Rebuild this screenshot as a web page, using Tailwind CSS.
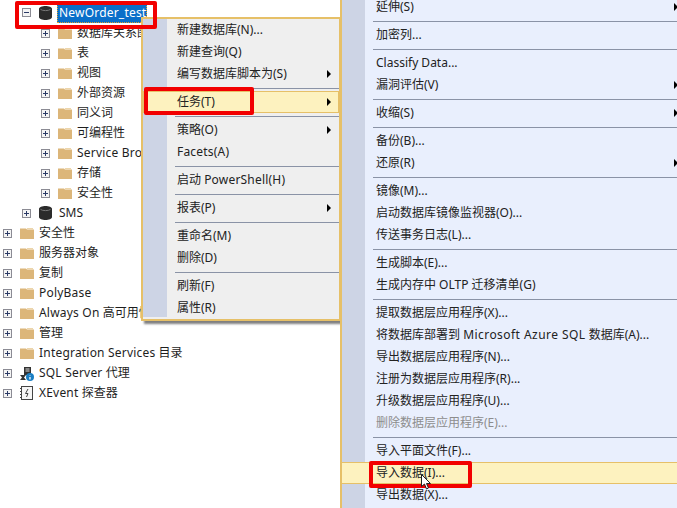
<!DOCTYPE html>
<html lang="zh">
<head>
  <meta charset="UTF-8" />
  <title>SSMS</title>
  <script src="https://cdn.jsdelivr.net/npm/@tailwindcss/browser@4"></script>
</head>
<body class="bg-white overflow-hidden text-[12px] leading-[20px] text-[#1e1e1e] font-['Noto_Sans','Noto_Sans_CJK_SC',sans-serif]">
  <svg class="hidden">
    <symbol id="plus" viewBox="0 0 9 9"><rect x=".5" y=".5" width="8" height="8" fill="#f4f4f4" stroke="#8b8b94"/><path d="M2 4.5h5M4.5 2v5" stroke="#2a3a66"/></symbol>
    <symbol id="minus" viewBox="0 0 9 9"><rect x=".5" y=".5" width="8" height="8" fill="#f4f4f4" stroke="#8b8b94"/><path d="M2 4.5h5" stroke="#2a3a66"/></symbol>
    <symbol id="folder" viewBox="0 0 14 12"><path d="M0 1.5h6l1 1h7V12H0z" fill="#dcb67a"/><path d="M7 1h6v1.500H7z" fill="#ecd5ab"/></symbol>
    <symbol id="db" viewBox="0 0 13 14"><path d="M0 3c0-4 13-4 13 0v8c0 4-13 4-13 0z" fill="#2b2b2b"/><path d="M1.500 3.400c2 1.600 8 1.600 10 0" stroke="#777" fill="none"/></symbol>
  </svg>

  <div class="relative w-[677px] h-[508px] overflow-hidden">
    <!-- object explorer tree -->
    <div class="pt-[2px]">
      <div class="flex items-center h-[21px] pl-[22px]">
        <svg class="w-[9px] h-[9px]"><use href="#minus"/></svg>
        <svg class="w-[13px] h-[14px] ml-2"><use href="#db"/></svg>
        <span class="ml-[5px] mt-[1px] pl-[1px] h-[19px] leading-[15px] bg-[#0a6fc9] text-white border border-dotted border-[#e0a030] w-[90px] whitespace-nowrap tracking-[0.2px]">NewOrder_test</span>
      </div>
      <div class="flex items-center h-5 pl-[41px]"><svg class="w-[9px] h-[9px]"><use href="#plus"/></svg><svg class="w-[14px] h-3 ml-2"><use href="#folder"/></svg><span class="ml-[5px] whitespace-nowrap">数据库关系图</span></div>
      <div class="flex items-center h-5 pl-[41px]"><svg class="w-[9px] h-[9px]"><use href="#plus"/></svg><svg class="w-[14px] h-3 ml-2"><use href="#folder"/></svg><span class="ml-[5px]">表</span></div>
      <div class="flex items-center h-5 pl-[41px]"><svg class="w-[9px] h-[9px]"><use href="#plus"/></svg><svg class="w-[14px] h-3 ml-2"><use href="#folder"/></svg><span class="ml-[5px]">视图</span></div>
      <div class="flex items-center h-5 pl-[41px]"><svg class="w-[9px] h-[9px]"><use href="#plus"/></svg><svg class="w-[14px] h-3 ml-2"><use href="#folder"/></svg><span class="ml-[5px]">外部资源</span></div>
      <div class="flex items-center h-5 pl-[41px]"><svg class="w-[9px] h-[9px]"><use href="#plus"/></svg><svg class="w-[14px] h-3 ml-2"><use href="#folder"/></svg><span class="ml-[5px]">同义词</span></div>
      <div class="flex items-center h-5 pl-[41px]"><svg class="w-[9px] h-[9px]"><use href="#plus"/></svg><svg class="w-[14px] h-3 ml-2"><use href="#folder"/></svg><span class="ml-[5px]">可编程性</span></div>
      <div class="flex items-center h-5 pl-[41px]"><svg class="w-[9px] h-[9px]"><use href="#plus"/></svg><svg class="w-[14px] h-3 ml-2"><use href="#folder"/></svg><span class="ml-[5px] whitespace-nowrap tracking-[0.2px]">Service Broker</span></div>
      <div class="flex items-center h-5 pl-[41px]"><svg class="w-[9px] h-[9px]"><use href="#plus"/></svg><svg class="w-[14px] h-3 ml-2"><use href="#folder"/></svg><span class="ml-[5px]">存储</span></div>
      <div class="flex items-center h-5 pl-[41px]"><svg class="w-[9px] h-[9px]"><use href="#plus"/></svg><svg class="w-[14px] h-3 ml-2"><use href="#folder"/></svg><span class="ml-[5px]">安全性</span></div>
      <div class="flex items-center h-5 pl-[22px]"><svg class="w-[9px] h-[9px]"><use href="#plus"/></svg><svg class="w-[13px] h-[14px] ml-2"><use href="#db"/></svg><span class="ml-[7px]">SMS</span></div>
      <div class="flex items-center h-5 pl-[3px]"><svg class="w-[9px] h-[9px]"><use href="#plus"/></svg><svg class="w-[14px] h-3 ml-2"><use href="#folder"/></svg><span class="ml-[5px]">安全性</span></div>
      <div class="flex items-center h-5 pl-[3px]"><svg class="w-[9px] h-[9px]"><use href="#plus"/></svg><svg class="w-[14px] h-3 ml-2"><use href="#folder"/></svg><span class="ml-[5px]">服务器对象</span></div>
      <div class="flex items-center h-5 pl-[3px]"><svg class="w-[9px] h-[9px]"><use href="#plus"/></svg><svg class="w-[14px] h-3 ml-2"><use href="#folder"/></svg><span class="ml-[5px]">复制</span></div>
      <div class="flex items-center h-5 pl-[3px]"><svg class="w-[9px] h-[9px]"><use href="#plus"/></svg><svg class="w-[14px] h-3 ml-2"><use href="#folder"/></svg><span class="ml-[5px] tracking-[0.2px]">PolyBase</span></div>
      <div class="flex items-center h-5 pl-[3px]"><svg class="w-[9px] h-[9px]"><use href="#plus"/></svg><svg class="w-[14px] h-3 ml-2"><use href="#folder"/></svg><span class="ml-[5px] whitespace-nowrap"><span class="tracking-[0.2px]">Always On</span> 高可用性</span></div>
      <div class="flex items-center h-5 pl-[3px]"><svg class="w-[9px] h-[9px]"><use href="#plus"/></svg><svg class="w-[14px] h-3 ml-2"><use href="#folder"/></svg><span class="ml-[5px]">管理</span></div>
      <div class="flex items-center h-5 pl-[3px]"><svg class="w-[9px] h-[9px]"><use href="#plus"/></svg><svg class="w-[14px] h-3 ml-2"><use href="#folder"/></svg><span class="ml-[5px] whitespace-nowrap"><span class="tracking-[0.2px]">Integration Services</span> 目录</span></div>
      <div class="flex items-center h-5 pl-[3px]">
        <svg class="w-[9px] h-[9px]"><use href="#plus"/></svg>
        <svg class="w-[15px] h-[15px] ml-[7px]" viewBox="0 0 15 15"><path d="M5 1h7v8H5z" fill="#333"/><path d="M6.500 3h4M6.500 5h4" stroke="#ddd"/><path d="M1 9h6l-2 2.500L7 14H1l2-2.500z" fill="#333"/><circle cx="11" cy="11" r="4" fill="#1b7fc4"/><path d="M11 9v.5M11 11v2.500" stroke="#fff" stroke-width="1.300"/></svg>
        <span class="ml-[5px] whitespace-nowrap"><span class="tracking-[0.2px]">SQL Server</span> 代理</span>
      </div>
      <div class="flex items-center h-5 pl-[3px]">
        <svg class="w-[9px] h-[9px]"><use href="#plus"/></svg>
        <svg class="w-[13px] h-[14px] ml-2" viewBox="0 0 13 14"><rect x="1.500" y=".5" width="11" height="13" fill="#f6f6f6" stroke="#444"/><path d="M0 2.500h2M0 5.500h2M0 8.500h2M0 11.500h2" stroke="#444"/><path d="M8 3 5.500 7.500h2.500L6.500 11" stroke="#444" fill="none"/></svg>
        <span class="ml-[6px] whitespace-nowrap"><span class="tracking-[0.2px]">XEvent</span> 探查器</span>
      </div>
    </div>

    <!-- database context menu -->
    <div class="absolute left-[141px] top-[17px] w-[200px] h-[304px] border-2 border-[#e6c068] bg-[#efefef] shadow-[3px_3px_2px_rgba(0,0,0,0.5)]">
      <div class="absolute left-0 top-0 bottom-[2px] w-[24px] bg-[#cdd4e5]"></div>
      <div class="relative text-[#222]">
        <div class="h-[22px] leading-[22px] pl-[34px]">新建数据库(N)...</div>
        <div class="h-[22px] leading-[22px] pl-[34px]">新建查询(Q)</div>
        <div class="relative h-[22px] leading-[22px] pl-[34px]">编写数据库脚本为(S)<span class="absolute right-[8px] top-[7px] border-y-[4px] border-l-[4px] border-y-transparent border-l-black"></span></div>
        <div class="h-[6px] pt-[3px] pl-[32px]"><div class="h-[1px] bg-[#8a93a6]"></div></div>
        <div class="relative h-[22px] leading-[20px] pl-[33px] bg-[#fdf2bf] border border-[#e6c068]">任务(T)<span class="absolute right-[7px] top-[6px] border-y-[4px] border-l-[4px] border-y-transparent border-l-black"></span></div>
        <div class="h-[6px] pt-[3px] pl-[32px]"><div class="h-[1px] bg-[#8a93a6]"></div></div>
        <div class="relative h-[22px] leading-[22px] pl-[34px]">策略(O)<span class="absolute right-[8px] top-[7px] border-y-[4px] border-l-[4px] border-y-transparent border-l-black"></span></div>
        <div class="h-[22px] leading-[22px] pl-[34px] tracking-[0.2px]">Facets(A)</div>
        <div class="h-[6px] pt-[3px] pl-[32px]"><div class="h-[1px] bg-[#8a93a6]"></div></div>
        <div class="h-[22px] leading-[22px] pl-[34px]">启动 <span class="tracking-[0.2px]">PowerShell(H)</span></div>
        <div class="h-[6px] pt-[3px] pl-[32px]"><div class="h-[1px] bg-[#8a93a6]"></div></div>
        <div class="relative h-[22px] leading-[22px] pl-[34px]">报表(P)<span class="absolute right-[8px] top-[7px] border-y-[4px] border-l-[4px] border-y-transparent border-l-black"></span></div>
        <div class="h-[6px] pt-[3px] pl-[32px]"><div class="h-[1px] bg-[#8a93a6]"></div></div>
        <div class="h-[22px] leading-[22px] pl-[34px]">重命名(M)</div>
        <div class="h-[22px] leading-[22px] pl-[34px]">删除(D)</div>
        <div class="h-[6px] pt-[3px] pl-[32px]"><div class="h-[1px] bg-[#8a93a6]"></div></div>
        <div class="h-[22px] leading-[22px] pl-[34px]">刷新(F)</div>
        <div class="h-[22px] leading-[22px] pl-[34px]">属性(R)</div>
      </div>
    </div>

    <!-- tasks submenu -->
    <div class="absolute left-[340px] top-0 w-[337px] h-[508px] overflow-hidden border-l-2 border-[#e6c068] bg-[#e9effd]">
      <div class="absolute left-0 top-0 bottom-0 w-[23px] bg-[#cdd4e5]"></div>
      <div class="relative -mt-[4px] text-[#222]">
        <div class="relative h-[22px] leading-[22px] pl-[34px]">延伸(S)<span class="absolute -right-[1px] top-[7px] border-y-[4px] border-l-[4px] border-y-transparent border-l-black"></span></div>
        <div class="h-[6px] pt-[3px] pl-[31px]"><div class="h-[1px] bg-[#8a93a6]"></div></div>
        <div class="h-[22px] leading-[22px] pl-[34px]">加密列...</div>
        <div class="h-[6px] pt-[3px] pl-[31px]"><div class="h-[1px] bg-[#8a93a6]"></div></div>
        <div class="h-[22px] leading-[22px] pl-[34px]">Classify Data...</div>
        <div class="relative h-[22px] leading-[22px] pl-[34px]">漏洞评估(V)<span class="absolute -right-[1px] top-[7px] border-y-[4px] border-l-[4px] border-y-transparent border-l-black"></span></div>
        <div class="h-[6px] pt-[3px] pl-[31px]"><div class="h-[1px] bg-[#8a93a6]"></div></div>
        <div class="relative h-[22px] leading-[22px] pl-[34px]">收缩(S)<span class="absolute -right-[1px] top-[7px] border-y-[4px] border-l-[4px] border-y-transparent border-l-black"></span></div>
        <div class="h-[6px] pt-[3px] pl-[31px]"><div class="h-[1px] bg-[#8a93a6]"></div></div>
        <div class="h-[22px] leading-[22px] pl-[34px]">备份(B)...</div>
        <div class="relative h-[22px] leading-[22px] pl-[34px]">还原(R)<span class="absolute -right-[1px] top-[7px] border-y-[4px] border-l-[4px] border-y-transparent border-l-black"></span></div>
        <div class="h-[6px] pt-[3px] pl-[31px]"><div class="h-[1px] bg-[#8a93a6]"></div></div>
        <div class="h-[22px] leading-[22px] pl-[34px]">镜像(M)...</div>
        <div class="h-[22px] leading-[22px] pl-[34px]">启动数据库镜像监视器(O)...</div>
        <div class="h-[22px] leading-[22px] pl-[34px]">传送事务日志(L)...</div>
        <div class="h-[6px] pt-[3px] pl-[31px]"><div class="h-[1px] bg-[#8a93a6]"></div></div>
        <div class="h-[22px] leading-[22px] pl-[34px]">生成脚本(E)...</div>
        <div class="h-[22px] leading-[22px] pl-[34px]">生成内存中 OLTP 迁移清单(G)</div>
        <div class="h-[6px] pt-[3px] pl-[31px]"><div class="h-[1px] bg-[#8a93a6]"></div></div>
        <div class="h-[22px] leading-[22px] pl-[34px]">提取数据层应用程序(X)...</div>
        <div class="h-[22px] leading-[22px] pl-[34px]">将数据库部署到 <span class="tracking-[0.45px]">Microsoft Azure SQL</span> 数据库(A)...</div>
        <div class="h-[22px] leading-[22px] pl-[34px]">导出数据层应用程序(N)...</div>
        <div class="h-[22px] leading-[22px] pl-[34px]">注册为数据层应用程序(R)...</div>
        <div class="h-[22px] leading-[22px] pl-[34px]">升级数据层应用程序(U)...</div>
        <div class="h-[22px] leading-[22px] pl-[34px] text-[#8d8d8d]">删除数据层应用程序(E)...</div>
        <div class="h-[6px] pt-[3px] pl-[31px]"><div class="h-[1px] bg-[#8a93a6]"></div></div>
        <div class="h-[22px] leading-[22px] pl-[34px]">导入平面文件(F)...</div>
        <div class="h-[22px] leading-[20px] pl-[34px] bg-[#fdf2bf] border-y border-[#e6c068]">导入数据(I)...</div>
        <div class="h-[22px] leading-[22px] pl-[34px]">导出数据(X)...</div>
      </div>
    </div>

    <!-- red annotation boxes -->
    <div class="absolute left-[15px] top-[1px] w-[142px] h-[28px] border-4 border-[#f20000] rounded-[2px]"></div>
    <div class="absolute left-[144px] top-[87px] w-[110px] h-[28px] border-4 border-[#f20000] rounded-[2px]"></div>
    <div class="absolute left-[369px] top-[461px] w-[103px] h-[27px] border-4 border-[#f20000] rounded-[2px]"></div>

    <!-- mouse pointer -->
    <svg class="absolute left-[421px] top-[474px] w-[10px] h-[16px]" viewBox="0 0 10 16"><path d="M.5.5v12l3-2.500 2 5 2-1-2-4.500h4z" fill="#fff" stroke="#222"/></svg>
  </div>
</body>
</html>
